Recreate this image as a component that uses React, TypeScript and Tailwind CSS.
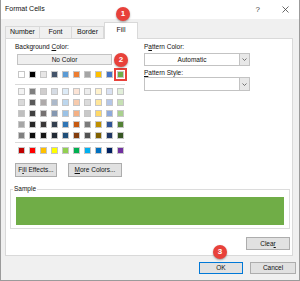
import React from 'react';

const theme = [
  ['#FFFFFF', '#000000', '#E7E6E6', '#44546A', '#5B9BD5', '#ED7D31', '#A5A5A5', '#FFC000', '#4472C4', '#70AD47'],
];
const tints = [
  ['#F2F2F2', '#7F7F7F', '#D0CECE', '#D6DCE4', '#DDEBF7', '#FCE4D6', '#EDEDED', '#FFF2CC', '#D9E1F2', '#E2EFDA'],
  ['#D9D9D9', '#595959', '#AEAAAA', '#ACB9CA', '#BDD7EE', '#F8CBAD', '#DBDBDB', '#FFE699', '#B4C6E7', '#C6E0B4'],
  ['#BFBFBF', '#404040', '#757171', '#8497B0', '#9BC2E6', '#F4B084', '#C9C9C9', '#FFD966', '#8EA9DB', '#A9D08E'],
  ['#A6A6A6', '#262626', '#3A3838', '#333F4F', '#2F75B5', '#C65911', '#7B7B7B', '#BF8F00', '#305496', '#548235'],
  ['#808080', '#0D0D0D', '#161616', '#222B35', '#1F4E78', '#833C0C', '#525252', '#806000', '#203764', '#375623'],
];
const standard = ['#C00000', '#FF0000', '#FFC000', '#FFFF00', '#92D050', '#00B050', '#00B0F0', '#0070C0', '#002060', '#7030A0'];

function Badge({ n, className }: { n: number; className: string }) {
  return (
    <span
      className={`absolute z-20 w-[14px] h-[14px] rounded-full bg-[#e8413a] text-white text-[8px] font-semibold leading-none flex items-center justify-center shadow-[0_1px_2px_rgba(0,0,0,0.35)] ${className}`}
    >
      {n}
    </span>
  );
}

function Swatch({ c, selected }: { c: string; selected?: boolean }) {
  return (
    <div className="relative">
      <div
        className={`w-[7px] h-[7px] border border-[#c6c6c6] ${selected ? 'outline-2 outline-[#e8413a] outline-offset-1' : ''}`}
        style={{ backgroundColor: c }}
      />
      {selected && <Badge n={2} className="-top-[18px] -left-[3px]" />}
    </div>
  );
}

function SwatchRow({ colors, selectedIndex }: { colors: string[]; selectedIndex?: number }) {
  return (
    <div className="flex gap-[4px]">
      {colors.map((c, i) => (
        <Swatch key={i} c={c} selected={i === selectedIndex} />
      ))}
    </div>
  );
}

function Dropdown({ value, h }: { value: string; h: string }) {
  return (
    <div className={`flex w-[106px] ${h} bg-white border border-[#c3c3c3]`}>
      <div className="flex-1 flex items-center justify-center text-[6.5px]">{value}</div>
      <div className="w-[10px] bg-[#e8e8e8] border-l border-[#c3c3c3] flex items-center justify-center">
        <svg width="5" height="3" viewBox="0 0 5 3">
          <path d="M0.5 0.5 L2.5 2.5 L4.5 0.5" fill="none" stroke="#555" strokeWidth="0.8" />
        </svg>
      </div>
    </div>
  );
}

function Button({ children, className }: { children: React.ReactNode; className: string }) {
  return (
    <div className={`flex items-center justify-center bg-[#e1e1e1] border text-[6.5px] ${className}`}>
      {children}
    </div>
  );
}

export default function App() {
  return (
    <div className="w-[300px] h-[281px] bg-[#f0f0f0] border-x border-b border-[#9b9b9b] flex flex-col text-[#111] font-['Liberation_Sans',Arial,sans-serif]">
      <div className="h-[19px] bg-white flex items-center pl-[4px] pr-[10px]">
        <span className="text-[7px]">Format Cells</span>
        <div className="ml-auto flex items-center gap-[22px] text-[#444]">
          <span className="text-[8px]">?</span>
          <svg width="7" height="7" viewBox="0 0 7 7">
            <path d="M0.5 0.5 L6.5 6.5 M6.5 0.5 L0.5 6.5" stroke="#444" strokeWidth="0.8" />
          </svg>
        </div>
      </div>

      <div className="h-[19px] flex items-end pl-[4px] text-[7px]">
        <div className="w-[35px] h-[12px] border border-b-0 border-[#d9d9d9] flex items-center justify-center">Number</div>
        <div className="w-[32px] h-[12px] border border-b-0 border-l-0 border-[#d9d9d9] flex items-center justify-center">Font</div>
        <div className="w-[32px] h-[12px] border border-b-0 border-l-0 border-[#d9d9d9] flex items-center justify-center">Border</div>
        <div className="relative z-10 -mb-px w-[34px] h-[17px] bg-white border border-b-0 border-[#d9d9d9] flex items-center justify-center pb-px">
          Fill
          <Badge n={1} className="-top-[16px] left-[11px]" />
        </div>
      </div>

      <div className="ml-[4px] w-[288px] h-[218px] bg-white border border-[#d9d9d9] flex flex-col">
        <div className="flex pl-[9px] pt-[4px]">
          <div className="w-[129px] flex flex-col">
            <div className="h-[8px] leading-[8px] text-[6.5px]">
              Background <span className="underline">C</span>olor:
            </div>
            <div className="mt-[3px] ml-[2px] w-[95px] h-[11px] bg-[#efefef] border border-[#c3c3c3] flex items-center justify-center text-[6.5px]">
              No Color
            </div>
            <div className="mt-[6px] ml-[3px]">
              <SwatchRow colors={theme[0]} selectedIndex={9} />
            </div>
            <div className="mt-[6px] w-[110px] h-px bg-[#dadada]" />
            <div className="mt-[3px] ml-[3px] flex flex-col gap-[4px]">
              {tints.map((row, i) => (
                <SwatchRow key={i} colors={row} />
              ))}
            </div>
            <div className="mt-[3px] w-[110px] h-px bg-[#dadada]" />
            <div className="mt-[4px] ml-[3px]">
              <SwatchRow colors={standard} />
            </div>
            <div className="mt-[9px] flex gap-[11px]">
              <Button className="w-[42px] h-[14px] border-[#adadad]">
                F<span className="underline">i</span>ll Effects...
              </Button>
              <Button className="w-[54px] h-[14px] border-[#adadad]">
                <span className="underline">M</span>ore Colors...
              </Button>
            </div>
          </div>
          <div className="w-[106px] flex flex-col">
            <div className="h-[8px] leading-[8px] text-[6.5px]">
              P<span className="underline">a</span>ttern Color:
            </div>
            <div className="mt-[2px]">
              <Dropdown value="Automatic" h="h-[13px]" />
            </div>
            <div className="mt-[3px] h-[8px] leading-[8px] text-[6.5px]">
              <span className="underline">P</span>attern Style:
            </div>
            <Dropdown value="" h="h-[14px]" />
          </div>
        </div>

        <fieldset className="mt-[8px] ml-[4px] mr-[2px] border border-[#dcdcdc] pb-[3px]">
          <legend className="ml-[2px] px-px text-[6.5px] leading-[8px]">Sample</legend>
          <div className="mt-[4px] mx-[5px] h-[28px] bg-[#70AD47]" />
        </fieldset>

        <div className="mt-[8px] mr-[2px] self-end">
          <Button className="w-[44px] h-[13px] border-[#adadad]">
            Clea<span className="underline">r</span>
          </Button>
        </div>
      </div>

      <div className="mt-[6px] pr-[3px] flex justify-end gap-[7px]">
        <div className="relative">
          <Button className="w-[44px] h-[12px] border-[#0078d7]">OK</Button>
          <Badge n={3} className="-top-[17px] left-[14px]" />
        </div>
        <Button className="w-[46px] h-[12px] border-[#adadad]">Cancel</Button>
      </div>
    </div>
  );
}
